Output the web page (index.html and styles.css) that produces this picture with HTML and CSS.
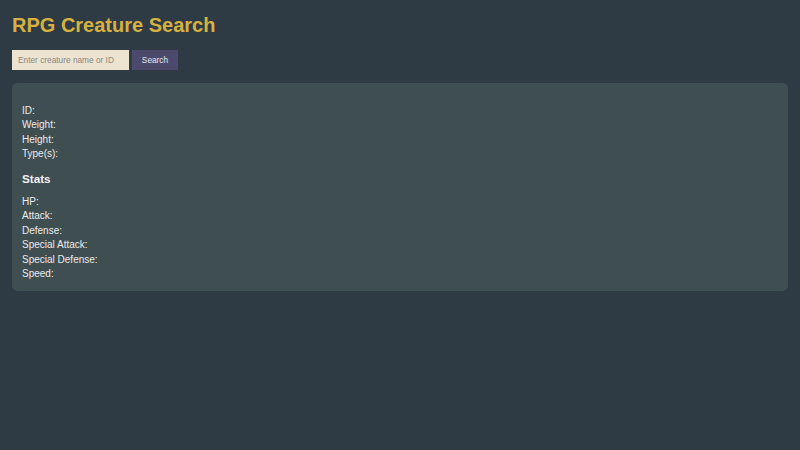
FILE: index.html
```html
<!DOCTYPE html>
<html lang="en">
<head>
  <meta charset="UTF-8">
  <meta name="viewport" content="width=device-width, initial-scale=1.0">
  <title>RPG Creature Search</title>
  <link rel="stylesheet" href="styles.css">
</head>
<body>
  <div class="app">
    <h1 class="title">RPG Creature Search</h1>
    <div class="search-bar">
      <input id="search-input" class="search-input" type="text" placeholder="Enter creature name or ID">
      <button id="search-button" class="search-btn">Search</button>
    </div>
    <div class="card">
      <div id="creature-name" class="creature-name"></div>
      <div class="info">
        <div>ID: <span id="creature-id"></span></div>
        <div>Weight: <span id="weight"></span></div>
        <div>Height: <span id="height"></span></div>
        <div>Type(s): <span id="types"></span></div>
      </div>
      <h3 class="stats-title">Stats</h3>
      <div class="stats">
        <div>HP: <span id="hp"></span></div>
        <div>Attack: <span id="attack"></span></div>
        <div>Defense: <span id="defense"></span></div>
        <div>Special Attack: <span id="special-attack"></span></div>
        <div>Special Defense: <span id="special-defense"></span></div>
        <div>Speed: <span id="speed"></span></div>
      </div>
    </div>
  </div>
</body>
</html>
```

FILE: styles.css
```css
html, body {
  margin: 0;
  background-color: #2e3b45;
}
body {
  font-family: "Liberation Sans", Arial, sans-serif;
  font-size: 10px;
  line-height: 14.4px;
  color: #ececec;
}
.app {
  padding: 12px;
}
.title {
  margin: 0 0 12px;
  font-size: 20px;
  line-height: 26px;
  color: #d6b13f;
}
.search-bar {
  display: flex;
  gap: 3px;
  margin-bottom: 13px;
}
.search-input {
  box-sizing: border-box;
  width: 117px; height: 20px;
  padding: 0 6px;
  border: 0;
  background-color: #ece3d1;
  font-family: inherit;
  font-size: 8.3px;
  color: #333;
}
.search-input::placeholder {
  color: #8a8780;
}
.search-btn {
  box-sizing: border-box;
  width: 46px; height: 20px;
  padding: 0;
  border: 0;
  background-color: #4b4a6d;
  color: #e6e6ee;
  font-family: inherit;
  font-size: 8.3px;
}
.card {
  background-color: #3f4e51;
  border-radius: 5px;
  padding: 10px 10px 10px;
}
.creature-name {
  height: 11px;
}
.stats-title {
  margin: 10px 0 9px;
  font-size: 11.7px;
  color: #f2f2f2;
}
```
